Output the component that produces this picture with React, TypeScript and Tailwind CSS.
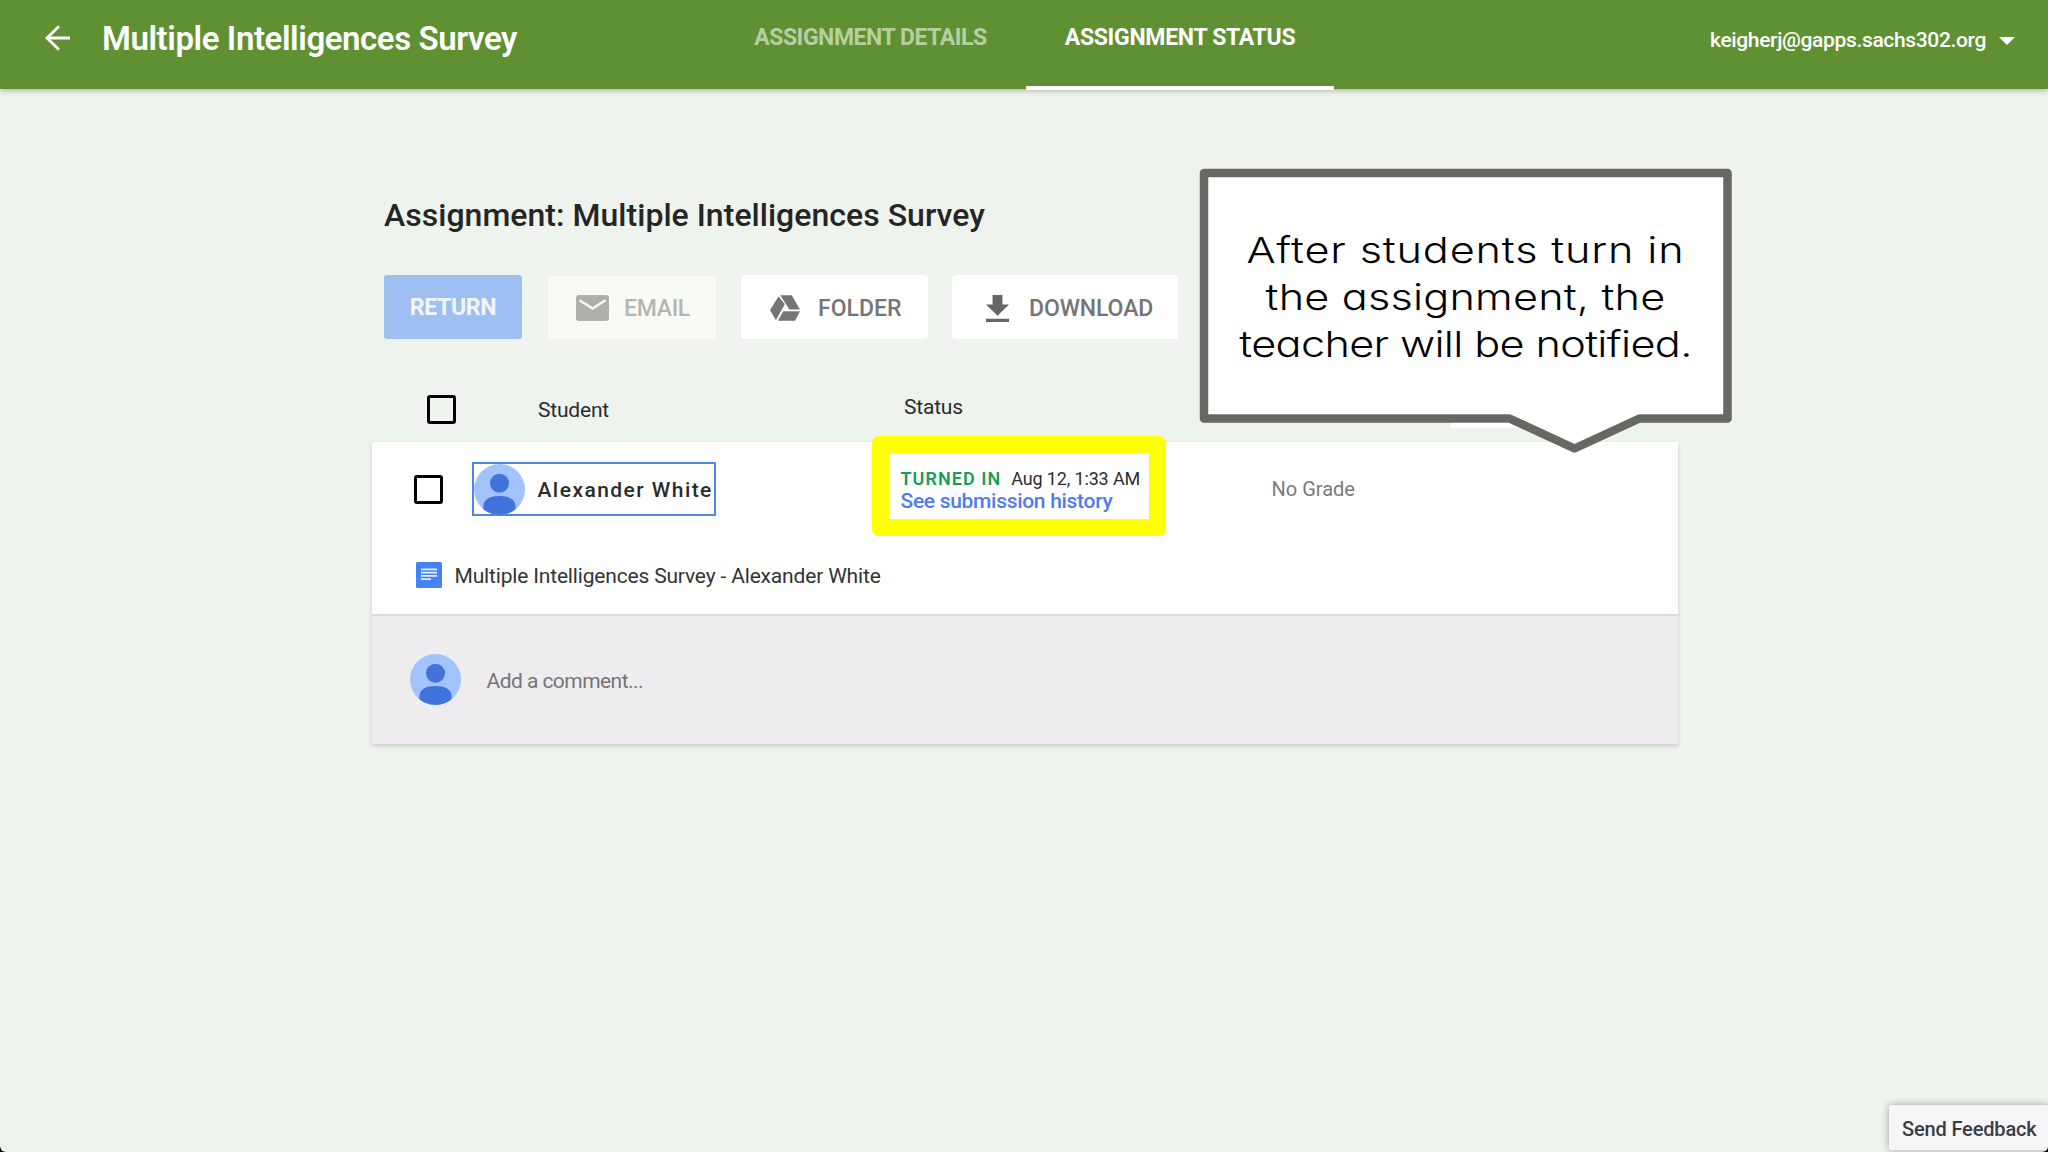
import clsx from 'clsx'
import type { ReactNode } from 'react'

function BackArrow() {
  return (
    <svg aria-hidden="true" className="h-[26px] w-[25px]" fill="none" viewBox="0 0 25 26">
      <path d="M14 1.2 2 13l12 11.8M2 13h23" stroke="#fff" strokeWidth="2.8" />
    </svg>
  )
}

function MailIcon() {
  return (
    <svg aria-hidden="true" className="h-[26px] w-[33px] shrink-0" viewBox="0 0 33 26">
      <rect fill="#aeb0ab" height="26" rx="3" width="33" />
      <path d="m3.500 5.200 13 8.300 13-8.300" fill="none" stroke="#f8faf5" strokeWidth="2.400" />
    </svg>
  )
}

function DriveIcon() {
  return (
    <svg aria-hidden="true" className="h-[26px] w-[30px] shrink-0" fill="#757673" viewBox="0 0 91 77">
      <path d="M26 3 0 45l18 31 16-29 11-20zM31 0h35l25 43H59zM24 77h52l15-29H40z" />
    </svg>
  )
}

function DownloadIcon() {
  return (
    <svg
      aria-hidden="true"
      className="h-[27px] w-[23px] shrink-0"
      fill="#666765"
      preserveAspectRatio="none"
      viewBox="5 3 14 17"
    >
      <path d="M19 9h-4V3H9v6H5l7 7 7-7zM5 18v2h14v-2H5z" />
    </svg>
  )
}

function DocIcon() {
  return (
    <svg aria-hidden="true" className="size-[26px] shrink-0" viewBox="0 0 26 26">
      <rect fill="#4483f3" height="26" rx="1.5" width="26" />
      <path d="M5 7.300h16M5 10.600h16M5 13.900h16M5 17.200h10" stroke="#e4eefd" strokeWidth="1.700" />
    </svg>
  )
}

function Avatar() {
  return (
    <span className="block size-[51px] shrink-0 overflow-hidden rounded-full bg-[#a2c3fc]">
      <svg aria-hidden="true" className="size-full" fill="#4273dd" viewBox="0 0 52 52">
        <circle cx="26" cy="19.700" r="9.700" />
        <path d="M9.500 44c0-8.500 7.500-11.300 16.500-11.300S42.500 35.500 42.500 44v8h-33z" />
      </svg>
    </span>
  )
}

function Checkbox() {
  return <span className="block size-[29px] shrink-0 rounded-[3px] border-3 border-black" />
}

function Tab({ active, children }: { active?: boolean; children: ReactNode }) {
  return (
    <button
      className={clsx(
        'flex h-[90px] justify-center border-b-4 pt-[22px] text-[23px] leading-8 font-bold',
        active
          ? 'w-[308px] border-white tracking-[-0.3px] text-white'
          : 'w-[311px] border-transparent tracking-[-0.45px] text-[#b5cfa0]',
      )}
      type="button"
    >
      {children}
    </button>
  )
}

function AppBar() {
  return (
    <header className="relative z-10 flex h-[88.500px] items-start bg-[#5f9132] pr-[33px] pl-[45px] text-white shadow-[0_1px_6px_rgba(60,70,50,0.45)]">
      <div className="pt-[25px]">
        <BackArrow />
      </div>
      <h1 className="ml-8 w-[613px] pt-[19px] text-[33px] leading-10 font-semibold tracking-[-0.42px]">
        Multiple Intelligences Survey
      </h1>
      <Tab>ASSIGNMENT DETAILS</Tab>
      <Tab active>ASSIGNMENT STATUS</Tab>
      <div className="ml-auto flex items-center gap-[13px] pt-6">
        <span className="text-[21px] leading-8 font-medium tracking-[-0.35px]">
          keigherj@gapps.sachs302.org
        </span>
        <svg aria-hidden="true" className="mt-0.5 h-2 w-4" fill="#fff" viewBox="0 0 16 8">
          <path d="M0 0h16L8 8z" />
        </svg>
      </div>
    </header>
  )
}

function Toolbar() {
  return (
    <div className="mt-10 ml-[13px] flex h-16 text-[23px] leading-none text-[#757575]">
      <button
        className="w-[138px] rounded-[3px] bg-[#9fbff3] font-bold tracking-[-0.3px] text-[#f1f6fd]"
        type="button"
      >
        RETURN
      </button>
      <button
        className="mt-px ml-[26px] flex w-[168px] items-center rounded-[4px] bg-[#f8faf5] pl-7 text-[#b3b5b1]"
        type="button"
      >
        <MailIcon />
        <span className="mt-0.5 ml-[15px] font-medium tracking-[-0.3px]">EMAIL</span>
      </button>
      <button
        className="ml-[25px] flex w-[187px] items-center rounded-[4px] bg-white pt-0.5 pl-[29px]"
        type="button"
      >
        <DriveIcon />
        <span className="mt-px ml-[18px] font-medium">FOLDER</span>
      </button>
      <button
        className="ml-6 flex w-[226px] items-center rounded-[4px] bg-white pt-0.5 pl-[34px]"
        type="button"
      >
        <DownloadIcon />
        <span className="mt-px ml-5 font-medium tracking-[-0.1px]">DOWNLOAD</span>
      </button>
    </div>
  )
}

function Submission() {
  return (
    <section className="ml-[0.500px] w-[1306.500px] bg-white shadow-[0_2px_4px_rgba(80,90,80,0.25)]">
      <div className="flex h-[94px] items-center pl-[42px]">
        <Checkbox />
        <a className="ml-[29px] flex h-[54px] w-[244px] items-center border-2 border-[#4d86ea]">
          <Avatar />
          <span className="mt-[3px] ml-[13px] text-[21px] font-medium tracking-[1.45px] whitespace-nowrap text-[#2b2b2b]">
            Alexander White
          </span>
        </a>
        <div className="relative mt-0.5 ml-[185px] w-[371px] leading-[23px]">
          <p className="flex gap-[10px] text-[18px]">
            <span className="font-semibold tracking-[1.05px] text-[#189d5b]">TURNED IN</span>
            <span className="tracking-[-0.15px] text-[#2d2d2d]">Aug 12, 1:33 AM</span>
          </p>
          <a className="block text-[21px] leading-[23px] font-medium tracking-[-0.3px] text-[#4f7bee]">
            See submission history
          </a>
          <span className="absolute -top-[31px] -left-[29px] h-[100px] w-[294px] rounded-[7px] border-17 border-[#ffff00]" />
        </div>
        <span className="text-[20px] text-[#7a7a7a]">No Grade</span>
      </div>
      <div className="flex h-[78px] items-center pt-0.5 pb-0.5 pl-11">
        <DocIcon />
        <span className="mt-[3px] ml-[13px] text-[21px] tracking-[-0.17px] text-[#333]">
          Multiple Intelligences Survey - Alexander White
        </span>
      </div>
      <div className="flex h-[130px] items-center border-t-2 border-[#dcdcdf] bg-[#eeecef] pb-0.5 pl-[38px]">
        <Avatar />
        <span className="mt-[5px] ml-[26px] text-[21px] tracking-[-0.55px] text-[#757575]">
          Add a comment...
        </span>
      </div>
    </section>
  )
}

function Callout() {
  return (
    <div className="absolute top-[168px] left-[1199px] z-20 h-[286px] w-[533px]">
      <svg aria-hidden="true" className="absolute inset-0 size-full" viewBox="0 0 533 286">
        <path
          d="M5 5h523.500v245.500H440.500L375.500 280.500 310.500 250.500H5z"
          fill="#fff"
          stroke="#666963"
          strokeLinejoin="round"
          strokeWidth="8.500"
        />
      </svg>
      <p className="relative flex origin-top scale-x-[1.2] flex-col items-center pt-[59px] font-[Inter] text-[36px] leading-[47px] font-[350] text-black [font-feature-settings:'cv11']">
        <span className="tracking-[0.7px]">After students turn in</span>
        <span className="tracking-[0.15px]">the assignment, the</span>
        <span className="tracking-[-0.55px]">teacher will be notified.</span>
      </p>
    </div>
  )
}

export default function App() {
  return (
    <div className="bg-black">
      <div className="relative h-[1152px] w-[2048px] overflow-hidden rounded-b-[6px] bg-[#eff3ed] font-[Roboto,sans-serif]">
        <AppBar />
        <main className="pt-[106.500px] pl-[371px]">
          <h2 className="ml-[13px] text-[32px] leading-10 font-medium tracking-[0.03px] text-[#252525]">
            Assignment: Multiple Intelligences Survey
          </h2>
          <Toolbar />
          <div className="mt-[38px] flex h-[65px] items-center pl-14 text-[21px] text-[#2b2b2b]">
            <Checkbox />
            <span className="mt-[3px] ml-[82px] w-[366px] tracking-[-0.2px]">Student</span>
            <span className="-mt-1 tracking-[-0.2px]">Status</span>
          </div>
          <Submission />
        </main>
        {/* lower edge of the grade header, mostly hidden by the callout */}
        <div className="absolute top-[400px] left-[1451px] h-7 w-[150px] bg-white" />
        <Callout />
        <button
          className="absolute right-0 bottom-0.5 flex h-[45px] w-[159px] items-center rounded-l-[2px] bg-[#f6f6f9] pt-0.5 pl-[13px] text-[20px] font-medium tracking-[-0.15px] text-[#3b3d45] shadow-[0_0_7px_rgba(0,0,0,0.35)]"
          type="button"
        >
          Send Feedback
        </button>
      </div>
    </div>
  )
}
